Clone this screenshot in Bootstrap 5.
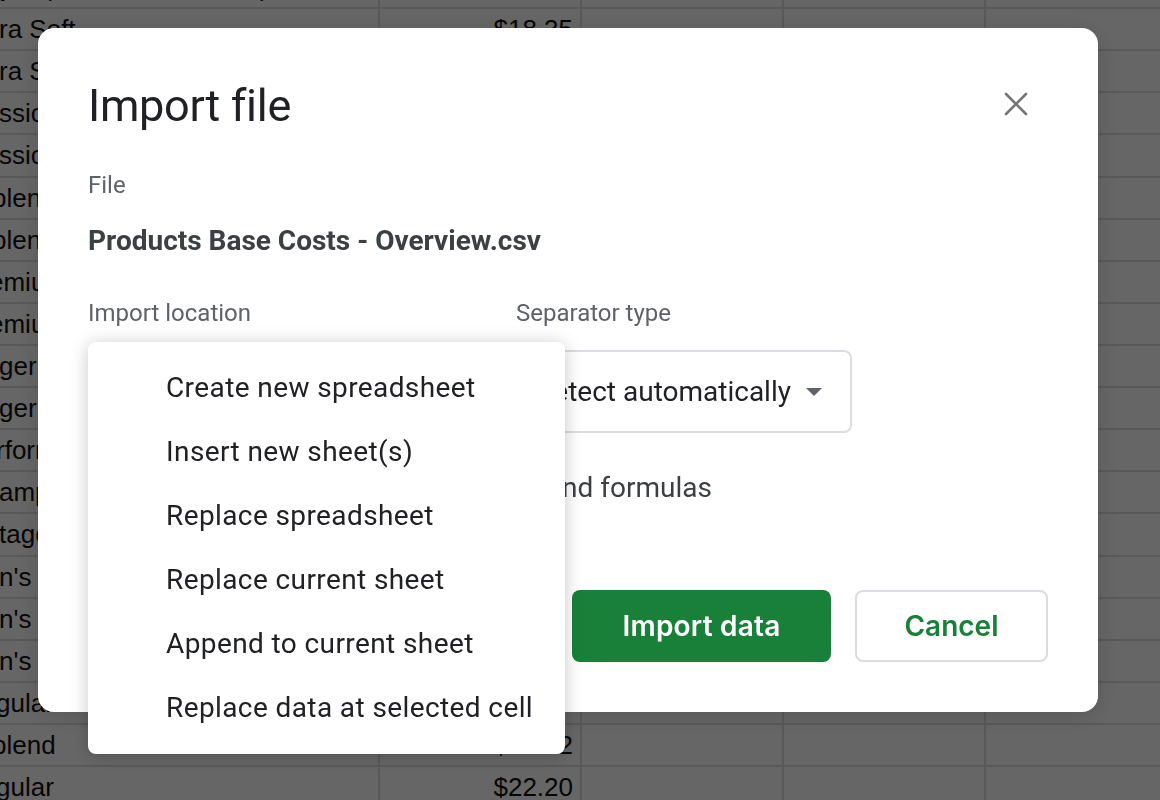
<!DOCTYPE html>
<html lang="en">

<head>
  <meta charset="UTF-8" />
  <meta name="viewport" content="width=device-width, initial-scale=1" />
  <title>Import file</title>
  <link href="https://cdn.jsdelivr.net/npm/bootstrap@5.3.0/dist/css/bootstrap.min.css" rel="stylesheet" />
  <style>
    body {
      background-color: #fff;
      overflow: hidden;
      height: 800px;
      font-family: Roboto, sans-serif;
    }

    .sheet-grid {
      width: 1187px;
      margin-top: -34px;
      table-layout: fixed;
      border-collapse: collapse;
      font-family: "Liberation Sans", sans-serif;
      font-size: 26px;
      color: #111;
    }

    .sheet-grid td {
      height: 42.11px;
      padding: 0 7px 0 0;
      border-bottom: 2px solid #dfdfdf;
      border-right: 2px solid #dfdfdf;
      white-space: nowrap;
      overflow: hidden;
      text-align: right;
      line-height: 1;
    }

    .sheet-grid td.name-cell {
      width: 379px;
      text-align: left;
    }

    .sheet-grid td.price-cell { width: 202px; }
    .sheet-grid td.blank-cell { width: 202px; }

    .shift-a { margin-left: -1px; }
    .shift-d { margin-left: -4px; }
    .shift-b { margin-left: -8px; }
    .shift-c { margin-left: -11px; }

    .dim-layer {
      --bs-backdrop-opacity: .6;
    }

    .import-dialog {
      --bs-modal-width: 1060px;
      width: 1060px;
      max-width: none;
      margin: 28px 0 0 38px;
    }

    .import-box {
      border: 0;
      border-radius: 16px;
      padding: 48px 50px 50px;
      color: #202124;
      box-shadow: 0 4px 24px rgba(0, 0, 0, .15);
    }

    .import-title {
      font-family: Roboto, sans-serif;
      font-size: 45px;
      font-weight: 400;
      line-height: 56px;
      margin: 2px 0 -2px;
      letter-spacing: -.3px;
      color: #202124;
    }

    .close-x {
      background: none;
      border: 0;
      padding: 0;
      width: 26px;
      height: 26px;
      margin-right: 19px;
      margin-top: 15px;
      display: block;
    }

    .field-label {
      font-size: 24px;
      line-height: 30px;
      color: #5f6368;
    }

    .file-label { margin-top: 38px; }

    .file-name {
      font-size: 28px;
      font-weight: 700;
      line-height: 32px;
      color: #3c4043;
      margin-top: 25px;
    }

    .fields-row { margin-top: 41px; }
    .location-col { width: 428px; }
    .separator-col { width: 336px; }

    .select-box {
      height: 83px;
      margin-top: 22px;
      border: 2px solid #dadce0;
      border-radius: 8px;
      font-size: 28px;
      color: #202124;
      background: #fff;
      padding: 0 28px 0 11px;
      gap: 15px;
      white-space: nowrap;
    }

    .location-col .select-box { width: 400px; }

    .caret-down {
      width: 0;
      height: 0;
      border-left: 8px solid transparent;
      border-right: 8px solid transparent;
      border-top: 8px solid #5f6368;
    }

    .menu-list {
      --bs-dropdown-min-width: 477px;
      --bs-dropdown-padding-y: 13px;
      --bs-dropdown-border-width: 0;
      --bs-dropdown-border-radius: 8px;
      --bs-dropdown-font-size: 28px;
      --bs-dropdown-color: #202124;
      --bs-dropdown-link-color: #202124;
      --bs-dropdown-item-padding-x: 0;
      --bs-dropdown-item-padding-y: 0;
      top: 44px;
      left: 0;
      margin: 0;
      width: 477px;
      padding-bottom: 15px;
      letter-spacing: .4px;
      box-shadow: 0 2px 18px rgba(0, 0, 0, .22);
    }

    .menu-list .dropdown-item {
      height: 64px;
      line-height: 66px;
      padding-left: 78px;
    }

    .convert-row {
      margin-top: 39px;
      margin-left: 70px;
      font-size: 28px;
      line-height: 32px;
      color: #3c4043;
    }

    .action-row { margin-top: 86px; gap: 24px; }

    .btn-go, .btn-stop {
      height: 72px;
      border-radius: 8px;
      font-family: Inter, sans-serif;
      font-size: 28px;
      font-weight: 600;
    }

    .btn-go {
      width: 259px;
      background-color: #188038;
      border: 0;
      color: #fff;
      letter-spacing: .2px;
    }

    .btn-stop {
      width: 193px;
      background-color: #fff;
      border: 2px solid #dadce0;
      color: #188038;
    }
  </style>
</head>

<body>
  <table class="sheet-grid">
    <tbody>
      <tr><td class="name-cell">yra (Heathered Unisex)</td><td class="price-cell">$18.35</td><td class="blank-cell"></td><td class="blank-cell"></td><td class="blank-cell"></td></tr>
      <tr><td class="name-cell"><div class="shift-a">ra Soft</div></td><td class="price-cell">$18.35</td><td class="blank-cell"></td><td class="blank-cell"></td><td class="blank-cell"></td></tr>
      <tr><td class="name-cell"><div class="shift-a">ra Soft</div></td><td class="price-cell">$18.35</td><td class="blank-cell"></td><td class="blank-cell"></td><td class="blank-cell"></td></tr>
      <tr><td class="name-cell"><div class="shift-a">ssic</div></td><td class="price-cell">$18.35</td><td class="blank-cell"></td><td class="blank-cell"></td><td class="blank-cell"></td></tr>
      <tr><td class="name-cell"><div class="shift-a">ssic</div></td><td class="price-cell">$18.35</td><td class="blank-cell"></td><td class="blank-cell"></td><td class="blank-cell"></td></tr>
      <tr><td class="name-cell"><div class="shift-b">blend</div></td><td class="price-cell">$18.35</td><td class="blank-cell"></td><td class="blank-cell"></td><td class="blank-cell"></td></tr>
      <tr><td class="name-cell"><div class="shift-b">blend</div></td><td class="price-cell">$18.35</td><td class="blank-cell"></td><td class="blank-cell"></td><td class="blank-cell"></td></tr>
      <tr><td class="name-cell"><div class="shift-c">emium</div></td><td class="price-cell">$18.35</td><td class="blank-cell"></td><td class="blank-cell"></td><td class="blank-cell"></td></tr>
      <tr><td class="name-cell"><div class="shift-c">emium</div></td><td class="price-cell">$18.35</td><td class="blank-cell"></td><td class="blank-cell"></td><td class="blank-cell"></td></tr>
      <tr><td class="name-cell"><div class="shift-a">ger</div></td><td class="price-cell">$18.35</td><td class="blank-cell"></td><td class="blank-cell"></td><td class="blank-cell"></td></tr>
      <tr><td class="name-cell"><div class="shift-a">ger</div></td><td class="price-cell">$18.35</td><td class="blank-cell"></td><td class="blank-cell"></td><td class="blank-cell"></td></tr>
      <tr><td class="name-cell"><div class="shift-d">rform</div></td><td class="price-cell">$18.35</td><td class="blank-cell"></td><td class="blank-cell"></td><td class="blank-cell"></td></tr>
      <tr><td class="name-cell"><div class="shift-a">amp</div></td><td class="price-cell">$18.35</td><td class="blank-cell"></td><td class="blank-cell"></td><td class="blank-cell"></td></tr>
      <tr><td class="name-cell"><div class="shift-a">tage</div></td><td class="price-cell">$18.35</td><td class="blank-cell"></td><td class="blank-cell"></td><td class="blank-cell"></td></tr>
      <tr><td class="name-cell"><div class="shift-a">n's</div></td><td class="price-cell">$18.35</td><td class="blank-cell"></td><td class="blank-cell"></td><td class="blank-cell"></td></tr>
      <tr><td class="name-cell"><div class="shift-a">n's</div></td><td class="price-cell">$18.35</td><td class="blank-cell"></td><td class="blank-cell"></td><td class="blank-cell"></td></tr>
      <tr><td class="name-cell"><div class="shift-a">n's</div></td><td class="price-cell">$18.35</td><td class="blank-cell"></td><td class="blank-cell"></td><td class="blank-cell"></td></tr>
      <tr><td class="name-cell"><div class="shift-d">gular</div></td><td class="price-cell">$22.20</td><td class="blank-cell"></td><td class="blank-cell"></td><td class="blank-cell"></td></tr>
      <tr><td class="name-cell"><div class="shift-b">blend</div></td><td class="price-cell">$21.52</td><td class="blank-cell"></td><td class="blank-cell"></td><td class="blank-cell"></td></tr>
      <tr><td class="name-cell"><div class="shift-d">gular</div></td><td class="price-cell">$22.20</td><td class="blank-cell"></td><td class="blank-cell"></td><td class="blank-cell"></td></tr>
    </tbody>
  </table>

  <div class="modal-backdrop show dim-layer"></div>

  <div class="modal d-block">
    <div class="modal-dialog import-dialog">
      <div class="modal-content import-box">
        <div class="d-flex justify-content-between align-items-start">
          <h1 class="import-title">Import file</h1>
          <button type="button" class="close-x" aria-label="Close">
            <svg width="26" height="26" viewBox="0 0 26 26" fill="none" stroke="#757575" stroke-width="2.6" stroke-linecap="round">
              <path d="M3 3 L23 23 M23 3 L3 23" />
            </svg>
          </button>
        </div>

        <div class="field-label file-label">File</div>
        <div class="file-name">Products Base Costs - Overview.csv</div>

        <div class="d-flex fields-row">
          <div class="location-col position-relative">
            <div class="field-label">Import location</div>
            <div class="select-box d-flex align-items-center justify-content-end">
              <span>Insert new sheet(s)</span>
              <span class="caret-down"></span>
            </div>
            <ul class="dropdown-menu show menu-list">
              <li><a class="dropdown-item" href="#">Create new spreadsheet</a></li>
              <li><a class="dropdown-item" href="#">Insert new sheet(s)</a></li>
              <li><a class="dropdown-item" href="#">Replace spreadsheet</a></li>
              <li><a class="dropdown-item" href="#">Replace current sheet</a></li>
              <li><a class="dropdown-item" href="#">Append to current sheet</a></li>
              <li><a class="dropdown-item" href="#">Replace data at selected cell</a></li>
            </ul>
          </div>
          <div class="separator-col">
            <div class="field-label">Separator type</div>
            <div class="select-box d-flex align-items-center justify-content-end">
              <span>Detect automatically</span>
              <span class="caret-down"></span>
            </div>
          </div>
        </div>

        <div class="convert-row">Convert text to numbers, dates and formulas</div>

        <div class="d-flex justify-content-end action-row">
          <button type="button" class="btn btn-go">Import data</button>
          <button type="button" class="btn btn-stop">Cancel</button>
        </div>
      </div>
    </div>
  </div>

  <script src="https://cdn.jsdelivr.net/npm/bootstrap@5.3.0/dist/js/bootstrap.bundle.min.js"></script>
</body>

</html>
